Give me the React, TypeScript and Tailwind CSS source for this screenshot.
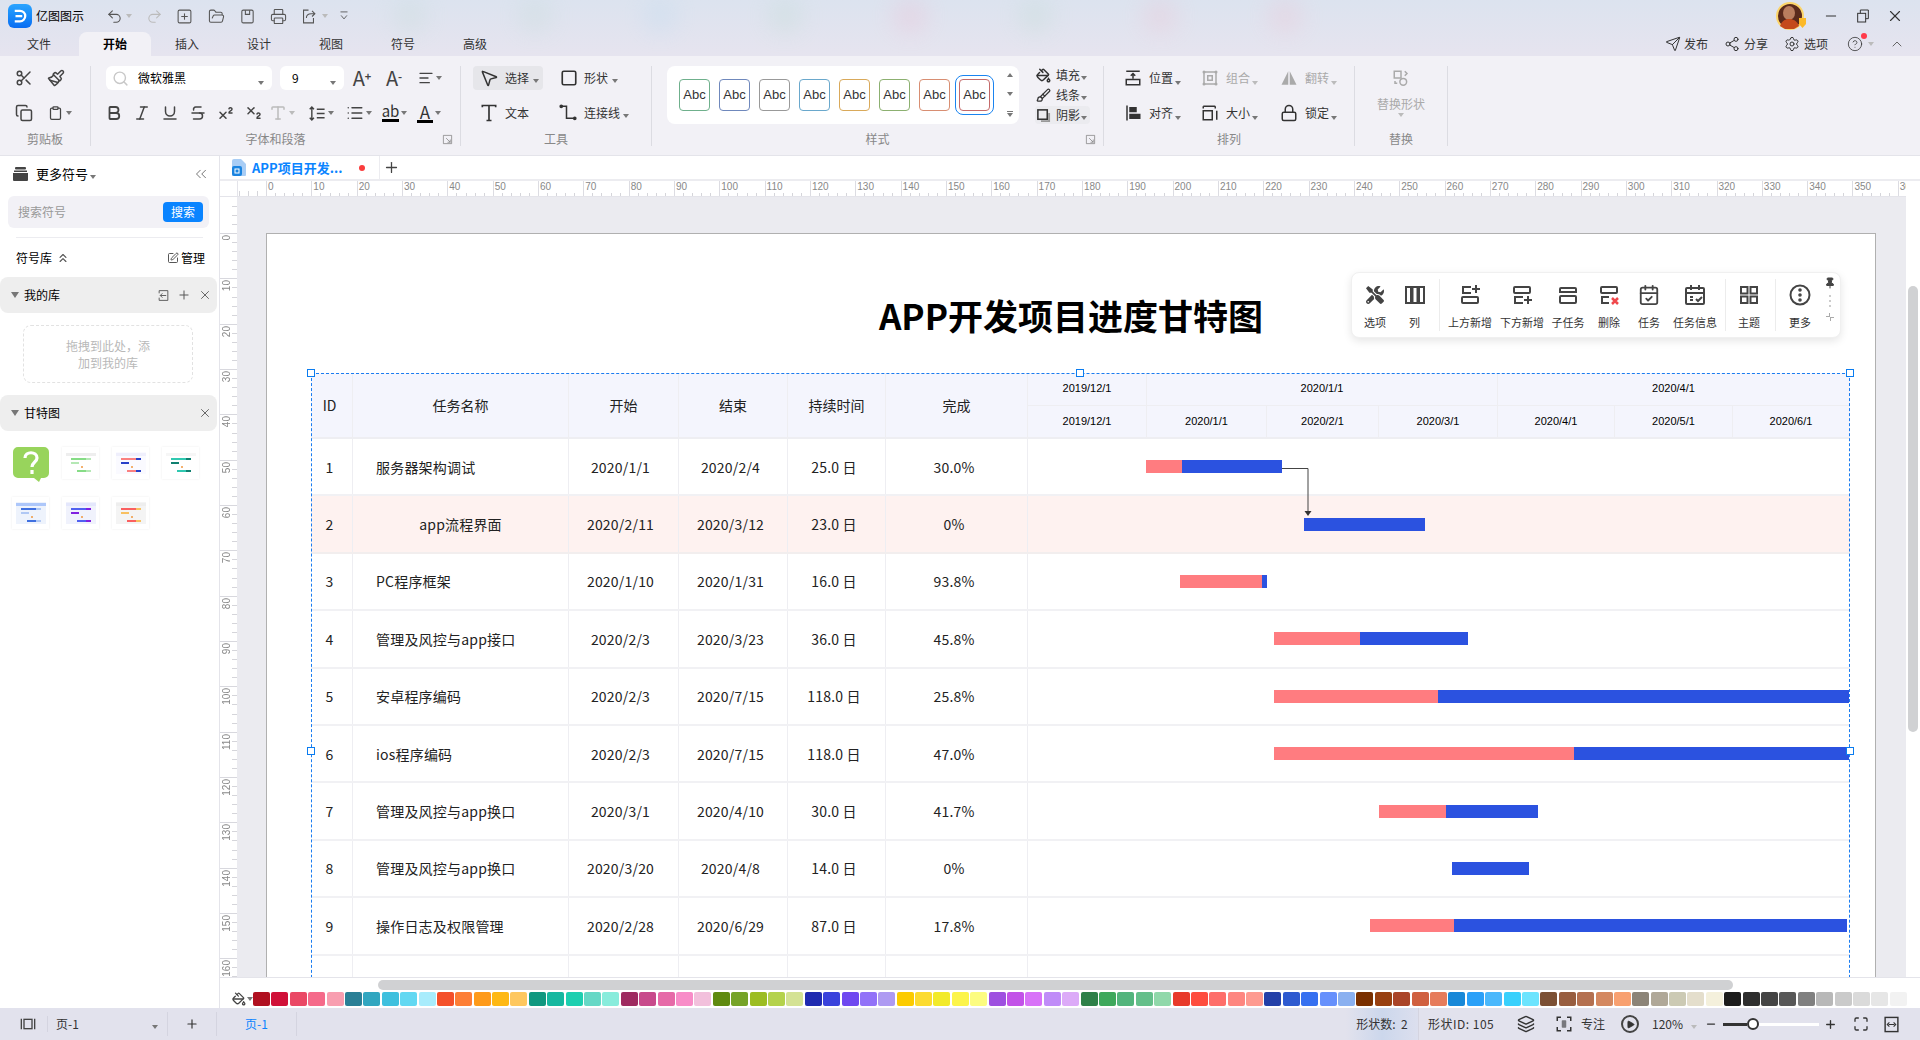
import {
  Bold, Brush, CalendarCheck, ChevronUp, ChevronsLeft, ChevronsUp, CircleHelp, Clipboard, Copy, FolderOpen, Italic,
  Layers, List, Lock, Maximize, Minus, MousePointer2, Paintbrush, PaintBucket, Pin, Play, Plus, Printer, Redo2, Scissors,
  Search, Send, Settings, Share2, Square, SquarePen, SquarePlus, Strikethrough, Subscript, Superscript, Type, Underline,
  Undo2, X, AlignLeft,
} from 'lucide-react'
import { FaTools } from 'react-icons/fa'
import type { ReactNode } from 'react'

const Caret = ({ light }: { light?: boolean }) => (
  <span className={light ? 'inline-block shrink-0 border-x-[3px] border-t-[4px] border-x-transparent border-t-[#bbb]' : 'inline-block shrink-0 border-x-[3px] border-t-[4px] border-x-transparent border-t-[#777]'} />
)

const Svg = ({ children, size = 16, className = '' }: { children: ReactNode; size?: number; className?: string }) => (
  <svg width={size} height={size} viewBox="0 0 24 24" fill="none" stroke="currentColor" strokeWidth="2" className={className}>
    {children}
  </svg>
)

const QuickBar = () => (
  <div className="ml-[22px] flex items-center text-[#555]">
    <div className="flex w-[40px] items-center gap-[3px]"><Undo2 size={17} strokeWidth={1.5} /><Caret light /></div>
    <div className="w-[30px] text-[#bbb]"><Redo2 size={17} strokeWidth={1.5} /></div>
    <div className="w-[32px]"><SquarePlus size={17} strokeWidth={1.5} /></div>
    <div className="w-[31px]"><FolderOpen size={17} strokeWidth={1.5} /></div>
    <div className="w-[31px]">
      <Svg size={17}><rect x="4" y="3" width="16" height="18" rx="2" strokeWidth="1.5" /><path d="M9 3v6h6V3" strokeWidth="1.5" /></Svg>
    </div>
    <div className="w-[30px]"><Printer size={17} strokeWidth={1.5} /></div>
    <div className="flex w-[37px] items-center gap-[5px]">
      <Svg size={17}><path d="M12 3H5v18h14v-7" strokeWidth="1.5" /><path d="M9 14c0-4 3-6 7-6h4M17 4l4 4-4 4" strokeWidth="1.5" /></Svg>
      <Caret light />
    </div>
    <Svg size={14}><path d="M6 5h12M7 11l5 6 5-6" strokeWidth="1.5" /></Svg>
  </div>
)

const MenuTab = ({ label, active }: { label: string; active?: boolean }) => (
  <div className={active ? 'ml-1 flex w-[72px] items-center justify-center rounded-t-lg bg-[#f2f1f6] font-bold text-black' : 'flex w-[72px] items-center justify-center text-[#333]'}>{label}</div>
)

const Spot = ({ className }: { className: string }) => <div className={`size-8 shrink-0 rounded-full opacity-30 blur-md ${className}`} />

const Header = () => (
  <div className="relative h-14 shrink-0 overflow-hidden bg-gradient-to-b from-[#dce3ef] to-[#e6e4ef] text-xs">
    <div className="absolute left-[394px] top-0 flex gap-[93px]">
      <Spot className="bg-[#bcd8d0]" />
      <Spot className="bg-[#bcd8d0]" />
      <Spot className="bg-[#b5d8ee]" />
      <Spot className="bg-[#b5d8c8]" />
      <Spot className="bg-[#f2b0c8]" />
      <Spot className="bg-[#b5d8c8]" />
      <Spot className="bg-[#f2b8c8]" />
      <Spot className="bg-[#f2b8c8]" />
    </div>
    <div className="relative flex h-8 items-center pl-2 pr-[9px]">
      <div className="flex size-6 items-center justify-center rounded-md bg-gradient-to-b from-[#2aa4ff] to-[#0b6df2]">
        <svg width="18" height="18" viewBox="0 0 24 24" fill="none" stroke="#fff" strokeWidth="3"><path d="M5 5h7a7 7 0 0 1 0 14H5M6 12h9" /></svg>
      </div>
      <span className="ml-1 text-black">亿图图示</span>
      <QuickBar />
      <div className="ml-auto mr-[11px] h-7 w-7">
        <svg width="32" height="30" viewBox="0 0 32 30">
          <circle cx="14" cy="14" r="13" fill="#5a2a1c" stroke="#fcd56a" strokeWidth="2" />
          <ellipse cx="13" cy="11" rx="6" ry="7" fill="#b97d5e" />
          <path d="M4 24c2-6 6-7 9-7s8 1 10 7l-5 3H9z" fill="#c4491c" />
          <path d="M23 16h7v6l-3.500 4-3.500-4z" fill="#fcb928" />
        </svg>
      </div>
      <div className="flex w-8 justify-center text-[#333]"><Minus size={16} strokeWidth={1.5} /></div>
      <div className="flex w-8 justify-center text-[#333]">
        <Svg><rect x="4" y="8" width="12" height="13" strokeWidth="1.5" /><path d="M8 8V3h12v13h-4" strokeWidth="1.5" /></Svg>
      </div>
      <div className="flex w-8 justify-center text-[#333]"><X size={18} strokeWidth={1.5} /></div>
    </div>
    <div className="relative flex h-6 pl-[3px]">
      <MenuTab label="文件" />
      <MenuTab label="开始" active />
      <MenuTab label="插入" />
      <MenuTab label="设计" />
      <MenuTab label="视图" />
      <MenuTab label="符号" />
      <MenuTab label="高级" />
      <div className="ml-auto flex items-center pr-[15px] text-[#333]">
        <Send size={16} strokeWidth={1.5} />
        <span className="ml-[3px]">发布</span>
        <Share2 size={16} strokeWidth={1.5} className="ml-4" />
        <span className="ml-1">分享</span>
        <Settings size={16} strokeWidth={1.5} className="ml-4" />
        <span className="ml-1">选项</span>
        <div className="relative ml-[19px] flex items-center gap-[5px]">
          <CircleHelp size={16} strokeWidth={1.2} />
          <span className="absolute left-[14px] -top-[3px] size-[6px] rounded-full bg-[#ff3b4b]" />
          <Caret light />
        </div>
        <ChevronUp size={16} strokeWidth={1.5} className="ml-[15px] text-[#666]" />
      </div>
    </div>
  </div>
)

const GroupLabel = ({ children }: { children: ReactNode }) => (
  <div className="mt-auto flex h-[14px] items-center justify-center text-xs leading-none text-[#888]">{children}</div>
)

const Launcher = () => (
  <div className="absolute bottom-[1px] right-[7px] text-[#777]">
    <Svg size={11}><path d="M3 21V3h18v18z" strokeWidth="1.500" /><path d="M9 9l9 9M18 12v6h-6" strokeWidth="1.500" /></Svg>
  </div>
)

const Row = ({ children }: { children: ReactNode }) => <div className="flex h-6 items-center">{children}</div>

const Cell = ({ children, className = 'w-7' }: { children: ReactNode; className?: string }) => (
  <div className={`flex shrink-0 items-center justify-center ${className}`}>{children}</div>
)

const ic = { size: 18, strokeWidth: 2 }

const ClipGroup = () => (
  <div className="relative flex h-20 w-[91px] shrink-0 flex-col border-r border-[#dcdce2] text-[#444]">
    <Row>
      <div className="ml-2 flex">
        <Cell className="w-8"><Scissors {...ic} /></Cell>
        <Cell className="w-8"><Paintbrush {...ic} /></Cell>
      </div>
    </Row>
    <div className="mt-[11px]">
      <Row>
        <div className="ml-2 flex">
          <Cell className="w-8"><Copy {...ic} /></Cell>
          <Cell className="w-8 gap-[3px] pl-[8px]"><Clipboard {...ic} /><Caret /></Cell>
        </div>
      </Row>
    </div>
    <GroupLabel>剪贴板</GroupLabel>
  </div>
)

const FontGroup = () => (
  <div className="relative flex h-20 w-[370px] shrink-0 flex-col border-r border-[#dcdce2] text-[#444]">
    <Row>
      <div className="ml-[15px] flex h-6 w-[166px] items-center rounded-md bg-white pl-[6px] pr-2">
        <Search size={17} strokeWidth={2} className="text-[#c8c8c8]" />
        <span className="ml-[9px] text-xs text-black">微软雅黑</span>
        <span className="ml-auto"><Caret /></span>
      </div>
      <div className="ml-2 flex h-6 w-16 items-center rounded-md bg-white pl-3 pr-2">
        <span className="text-xs text-black">9</span>
        <span className="ml-auto"><Caret /></span>
      </div>
      <Cell className="ml-[2px] w-8">
        <span className="text-[20px] leading-none text-[#444]">A<sup className="text-[11px] font-bold">+</sup></span>
      </Cell>
      <Cell className="w-8">
        <span className="text-[20px] leading-none text-[#444]">A<sup className="text-[11px] font-bold">-</sup></span>
      </Cell>
      <Cell className="ml-2 w-6 gap-[2px]"><AlignLeft {...ic} /><Caret /></Cell>
    </Row>
    <div className="mt-[11px]">
      <Row>
        <div className="ml-[9px] flex items-center">
          <Cell><Bold {...ic} strokeWidth={2.4} /></Cell>
          <Cell><Italic {...ic} /></Cell>
          <Cell><Underline {...ic} /></Cell>
          <Cell><Strikethrough {...ic} /></Cell>
          <Cell><Superscript {...ic} /></Cell>
          <Cell><Subscript {...ic} /></Cell>
          <Cell className="w-7 gap-[2px] text-[#bbb]"><Type {...ic} /><Caret light /></Cell>
        </div>
        <div className="ml-[13px] flex w-[37px] items-center gap-[2px]">
          <Svg size={17}>
            <path d="M4 3v18M1 6l3-3 3 3M1 18l3 3 3-3M11 6h11M11 12h11M11 18h11" />
          </Svg>
          <Caret />
        </div>
        <div className="flex w-9 items-center gap-[2px]"><List {...ic} /><Caret /></div>
        <div className="flex w-[35px] items-center gap-[2px]">
          <div className="flex w-[17px] flex-col items-center text-[15px] leading-[14px] text-[#333]">
            <span>ab</span>
            <span className="mt-[1px] h-[3px] w-full bg-black" />
          </div>
          <Caret />
        </div>
        <div className="flex items-center gap-[2px]">
          <div className="flex w-4 flex-col items-center text-[17px] leading-[15px] text-[#333]">
            <span>A</span>
            <span className="mt-[1px] h-[3px] w-full bg-black" />
          </div>
          <Caret />
        </div>
      </Row>
    </div>
    <GroupLabel>字体和段落</GroupLabel>
    <Launcher />
  </div>
)

const ToolsGroup = () => (
  <div className="relative flex h-20 w-[191px] shrink-0 flex-col border-r border-[#dcdce2] text-xs text-[#333]">
    <Row>
      <div className="ml-3 flex h-6 w-[70px] items-center rounded bg-[#e6e6ea] pl-[6px]">
        <MousePointer2 size={20} strokeWidth={1.8} />
        <span className="ml-[6px]">选择</span>
        <span className="ml-[4px]"><Caret /></span>
      </div>
      <div className="ml-[17px]"><Square size={18} strokeWidth={2.2} /></div>
      <span className="ml-[6px]">形状</span>
      <span className="ml-[4px]"><Caret /></span>
    </Row>
    <div className="mt-[11px]">
      <Row>
        <div className="ml-[18px]"><Svg size={20}><path d="M4 5V3h16v2M12 3v18M9 21h6" /></Svg></div>
        <span className="ml-[6px]">文本</span>
        <div className="ml-[30px]">
          <Svg size={18}><path d="M3 3h7v16h9" /><circle cx="3" cy="3" r="1.500" fill="currentColor" /><circle cx="21" cy="19" r="1.500" fill="currentColor" /></Svg>
        </div>
        <span className="ml-[7px]">连接线</span>
        <span className="ml-[3px]"><Caret /></span>
      </Row>
    </div>
    <GroupLabel>工具</GroupLabel>
  </div>
)

const styleColors = ['border-[#6fb08c]', 'border-[#6f88bc]', 'border-[#999999]', 'border-[#6aa8cc]', 'border-[#d9a95a]', 'border-[#8cb070]', 'border-[#d88e72]']

const StylesGroup = () => (
  <div className="relative flex h-20 w-[452px] shrink-0 flex-col border-r border-[#dcdce2]">
    <div className="flex">
      <div className="ml-[15px] flex h-[58px] w-[352px] items-center rounded-lg bg-white pl-3">
        <div className="flex gap-[9px]">
          {styleColors.map(c => (
            <div key={c} className={`flex h-8 w-[31px] items-center justify-center rounded border bg-white font-['Liberation_Sans',sans-serif] text-[13px] text-[#333] ${c}`}>Abc</div>
          ))}
          <div className="flex h-8 w-[31px] items-center justify-center rounded border border-[#c46a6a] bg-white font-['Liberation_Sans',sans-serif] text-[13px] text-[#333] outline-[1.5px] outline-offset-[3px] outline-[#1a84f0]">Abc</div>
        </div>
        <div className="ml-[17px] flex h-[44px] flex-col items-center justify-between">
          <span className="inline-block border-x-[3px] border-b-[4px] border-x-transparent border-b-[#777]" />
          <Caret />
          <div className="flex flex-col items-center gap-[1px]">
            <span className="h-px w-[6px] bg-[#777]" />
            <Caret />
          </div>
        </div>
      </div>
      <div className="ml-[16px] flex h-[58px] w-[55px] flex-col justify-between text-xs text-[#333]">
        <div className="flex h-[18px] items-center pl-[1px]">
          <PaintBucket size={15} strokeWidth={2.4} />
          <span className="ml-[5px]">填充</span>
          <span className="ml-[1px]"><Caret /></span>
        </div>
        <div className="flex h-[18px] items-center pl-[1px]">
          <Brush size={15} strokeWidth={2} />
          <span className="ml-[5px]">线条</span>
          <span className="ml-[1px]"><Caret /></span>
        </div>
        <div className="flex h-[18px] items-center rounded bg-[#ebebef] pl-[1px]">
          <Svg size={15}><rect x="3" y="3" width="15" height="15" strokeWidth="2.500" /><path d="M21 8v13H8" strokeWidth="3" stroke="#999" /></Svg>
          <span className="ml-[5px]">阴影</span>
          <span className="ml-[1px]"><Caret /></span>
        </div>
      </div>
    </div>
    <GroupLabel>样式</GroupLabel>
    <Launcher />
  </div>
)

const ArrangeItem = ({ icon, label, off, className }: { icon: ReactNode; label: string; off?: boolean; className: string }) => (
  <div className={off ? `flex shrink-0 items-center text-[#aaa] ${className}` : `flex shrink-0 items-center text-[#333] ${className}`}>
    <div className="w-4 shrink-0">{icon}</div>
    <span className="ml-[9px] text-xs">{label}</span>
    <span className="ml-[2px]"><Caret light={off} /></span>
  </div>
)

const ArrangeGroup = () => (
  <div className="relative flex h-20 w-[251px] shrink-0 flex-col border-r border-[#dcdce2]">
    <Row>
      <div className="ml-5 flex">
        <ArrangeItem className="w-[77px]" label="位置" icon={<Svg size={18}><path d="M3 3h18M12 7v6M9 9l3-3 3 3" /><rect x="3" y="14" width="18" height="7" /></Svg>} />
        <ArrangeItem className="w-[79px]" off label="组合" icon={<Svg size={18}><rect x="4" y="4" width="16" height="16" /><rect x="9" y="9" width="6" height="6" /><circle cx="4" cy="4" r="1" /><circle cx="20" cy="4" r="1" /><circle cx="4" cy="20" r="1" /><circle cx="20" cy="20" r="1" /></Svg>} />
        <ArrangeItem className="w-16" off label="翻转" icon={<svg width="18" height="18" viewBox="0 0 24 24" fill="currentColor"><path d="M11 3v18H2zM13 3l9 18h-9z" /></svg>} />
      </div>
    </Row>
    <div className="mt-[11px]">
      <Row>
        <div className="ml-5 flex">
          <ArrangeItem className="w-[77px]" label="对齐" icon={<Svg size={18}><path d="M4 2v20" /><rect x="8" y="5" width="8" height="5" fill="currentColor" /><rect x="8" y="14" width="13" height="5" fill="currentColor" /></Svg>} />
          <ArrangeItem className="w-[79px]" label="大小" icon={<Svg size={18}><path d="M3 3h16M3 6V3M19 6V3" /><rect x="3" y="9" width="12" height="12" /><path d="M21 9v12" /></Svg>} />
          <ArrangeItem className="w-16" label="锁定" icon={<Lock size={18} strokeWidth={2} />} />
        </div>
      </Row>
    </div>
    <GroupLabel>排列</GroupLabel>
  </div>
)

const ReplaceGroup = () => (
  <div className="relative flex h-20 w-[93px] shrink-0 flex-col items-center border-r border-[#dcdce2]">
    <div className="mt-[3px] flex h-[18px] text-[#aaa]">
      <Svg size={18}><rect x="3" y="3" width="9" height="9" /><circle cx="15" cy="17" r="4.500" /><path d="M17 3l3 3-3 3M4 16v3l3 0" /></Svg>
    </div>
    <span className="mt-[9px] text-xs leading-4 text-[#aaa]">替换形状</span>
    <div className="mt-px flex h-1"><Caret light /></div>
    <div className="mt-auto flex w-full flex-col"><GroupLabel>替换</GroupLabel></div>
  </div>
)

const Ribbon = () => (
  <div className="flex h-[99px] shrink-0 bg-[#f2f1f6] pt-[10px]">
    <ClipGroup />
    <FontGroup />
    <ToolsGroup />
    <StylesGroup />
    <ArrangeGroup />
    <ReplaceGroup />
  </div>
)

const Thumb = ({ head, a, b, bg }: { head: string; a: string; b: string; bg: string }) => (
  <svg width="37" height="32" viewBox="0 0 37 32" className="shadow-[0_0_2px_rgba(0,0,0,0.08)]">
    <rect width="37" height="32" fill="#fff" />
    <rect x="4" y="5" width="30" height="22" fill={bg} />
    <rect x="4" y="6" width="30" height="3" fill={head} opacity="0.5" />
    <rect x="9" y="11" width="20" height="2" fill={a} />
    <rect x="24" y="11" width="5" height="2" fill={b} />
    <rect x="9" y="15" width="8" height="2" fill={b} />
    <rect x="19" y="19" width="2" height="2" fill="#f09030" opacity="0.7" />
    <rect x="15" y="23" width="14" height="2" fill={a} />
    <rect x="24" y="23" width="5" height="2" fill={b} />
  </svg>
)

const LeftPanel = () => (
  <div className="flex w-[220px] shrink-0 flex-col border-r border-[#e4e4ea] bg-white text-xs text-black">
    <div className="flex h-9 items-center pl-[13px] pr-[9px]">
      <svg width="15" height="14" viewBox="0 0 15 14" fill="#444"><rect x="2" y="0" width="11" height="2.500" rx="1" /><rect x="1" y="3.500" width="13" height="1.500" /><path d="M0 6h15v7a1 1 0 0 1-1 1H1a1 1 0 0 1-1-1z" /></svg>
      <span className="ml-2 text-[13px]">更多符号</span>
      <span className="ml-[2px]"><Caret /></span>
      <ChevronsLeft size={18} strokeWidth={1.2} className="ml-auto text-[#666]" />
    </div>
    <div className="mx-2 mt-1 flex h-8 w-[201px] items-center rounded-md bg-[#f2f1f6] pl-[10px] pr-[6px]">
      <span className="text-[#999]">搜索符号</span>
      <div className="ml-auto flex h-5 w-10 items-center justify-center rounded bg-[#0a84ff] text-white">搜索</div>
    </div>
    <div className="mx-4 mt-[9px] h-px bg-[#ececf0]" />
    <div className="flex h-[39px] items-center pl-4 pr-[14px]">
      <span>符号库</span>
      <ChevronsUp size={14} strokeWidth={2} className="ml-[4px] text-[#555]" />
      <SquarePen size={12} strokeWidth={1.8} className="ml-auto text-[#444]" />
      <span className="ml-[2px]">管理</span>
    </div>
    <div className="flex h-9 w-[217px] items-center rounded-lg bg-[#eeeeee] pl-[11px] pr-[5px]">
      <span className="inline-block border-x-[4px] border-t-[6px] border-x-transparent border-t-[#777]" />
      <span className="ml-[5px]">我的库</span>
      <div className="ml-auto flex items-center gap-[7px] text-[#555]">
        <Svg size={13}><path d="M4 8V3h16v18H4v-5" strokeWidth="1.700" /><path d="M17 12H6M10 8l-4 4 4 4" strokeWidth="1.700" /></Svg>
        <Plus size={14} strokeWidth={1.7} />
        <X size={14} strokeWidth={1.5} />
      </div>
    </div>
    <div className="ml-[23px] mt-3 flex h-[58px] w-[170px] items-center justify-center rounded-lg border border-dashed border-[#e2e2e2] px-[38px] text-center leading-[17px] text-[#b8b8b8]">
      拖拽到此处，添加到我的库
    </div>
    <div className="mt-3 flex h-9 w-[217px] items-center rounded-lg bg-[#eeeeee] pl-[11px] pr-[5px]">
      <span className="inline-block border-x-[4px] border-t-[6px] border-x-transparent border-t-[#777]" />
      <span className="ml-[5px]">甘特图</span>
      <X size={14} strokeWidth={1.5} className="ml-auto text-[#555]" />
    </div>
    <div className="ml-[12px] mt-4 grid w-[187px] grid-cols-[37px_37px_37px_37px] gap-x-[13px] gap-y-[18px]">
      <div className="flex h-8 items-start justify-center">
        <svg width="36" height="36" viewBox="0 0 36 36"><path d="M5 0h26a5 5 0 0 1 5 5v21a5 5 0 0 1-5 5h-3l-2 4-5-4H5a5 5 0 0 1-5-5V5a5 5 0 0 1 5-5z" fill="#98d45c" /><path d="M12 11c0-7 12-7 12 0 0 4-5 4-5 9M19 23v4" stroke="#fff" strokeWidth="3.200" fill="none" /></svg>
      </div>
      <Thumb head="#dddddd" a="#86dc86" b="#b5e8b5" bg="#ffffff" />
      <Thumb head="#e4e4fa" a="#fa8080" b="#2840c8" bg="#fafaff" />
      <Thumb head="#eeeeee" a="#30c8b0" b="#108070" bg="#ffffff" />
      <Thumb head="#6c9cf8" a="#4070e0" b="#b0c8f4" bg="#eef3fc" />
      <Thumb head="#d8dcfc" a="#5060f0" b="#8020e0" bg="#f0f2fc" />
      <Thumb head="#e8e8e8" a="#fa6060" b="#f8c060" bg="#f4f4f4" />
    </div>
  </div>
)

const TabBar = () => (
  <div className="flex h-[25px] shrink-0 items-center border-b-2 border-[#ececf0] bg-white">
    <div className="ml-[12px]">
      <svg width="14" height="17" viewBox="0 0 14 17"><path d="M2 0h7l5 5v11a1 1 0 0 1-1 1H1a1 1 0 0 1-1-1V2a2 2 0 0 1 2-2z" fill="#a8cdf5" /><rect x="0" y="7" width="10" height="10" rx="2" fill="#1a84e0" /><rect x="3" y="10" width="4" height="4" fill="none" stroke="#fff" /></svg>
    </div>
    <span className="ml-[6px] w-[86px] whitespace-nowrap text-[13px] font-bold text-[#0a84ff]">APP项目开发...</span>
    <span className="ml-[21px] size-[6px] rounded-full bg-[#fa3c3c]" />
    <span className="ml-[14px] h-full border-l border-[#ececf0]" />
    <Plus size={17} strokeWidth={1.8} className="ml-[3px] text-[#444]" />
  </div>
)

const HRuler = () => (
  <div className="flex h-4 shrink-0 overflow-hidden border-b border-[#e4e4ea] bg-white pl-[17px] font-['Liberation_Sans',sans-serif] text-[10px] leading-[12px] text-[#888]">
    <div className="flex w-[29px] shrink-0 items-end justify-end border-l border-[#e4e4ea]">
      {[0, 1, 2].map(i => <span key={i} className="h-[5px] w-[9px] border-l border-[#d5d5da]" />)}
    </div>
    {Array.from({ length: 37 }, (_, i) => (
      <div key={i} className="flex w-[45.33px] shrink-0 flex-col border-l border-[#dcdce2]">
        <span className="pl-[1px]">{i * 10}</span>
        <div className="mt-auto flex h-[5px] justify-end">
          {[0, 1, 2, 3].map(j => <span key={j} className="w-[9.06px] border-l border-[#d5d5da]" />)}
        </div>
      </div>
    ))}
  </div>
)

const VRuler = () => (
  <div className="flex w-[17px] shrink-0 flex-col overflow-hidden bg-white font-['Liberation_Sans',sans-serif] text-[10px] leading-[10px] text-[#888]">
    <div className="flex h-9 shrink-0 flex-col items-end justify-end">
      {[0, 1, 2].map(i => <span key={i} className="h-[9px] w-[5px] border-t border-[#d5d5da]" />)}
    </div>
    {Array.from({ length: 17 }, (_, i) => (
      <div key={i} className="flex h-[45.33px] shrink-0 border-t border-[#d8d8de]">
        <span className="ml-[2px] mt-[1px] self-start rotate-180 [writing-mode:vertical-rl]">{i * 10}</span>
        <div className="ml-auto flex flex-col justify-end">
          {[0, 1, 2, 3].map(j => <span key={j} className="h-[9.06px] w-[5px] border-t border-[#d5d5da]" />)}
        </div>
      </div>
    ))}
  </div>
)

const tools = [
  { label: '选项', cell: 'ml-[3px] w-10', icon: <FaTools size={18} /> },
  { label: '列', cell: 'w-[39px]', icon: <Svg size={24}><rect x="3" y="4" width="5" height="16" /><rect x="9.500" y="4" width="5" height="16" /><rect x="16" y="4" width="5" height="16" /></Svg> },
  { label: 'sep', cell: 'ml-[5px]', icon: null },
  { label: '上方新增', cell: 'ml-[5px] w-[50px]', icon: <Svg size={24}><path d="M13 4H5v6h8" /><path d="M18 2v8M14 6h8" /><rect x="4" y="14" width="16" height="6" rx="1" /></Svg> },
  { label: '下方新增', cell: 'ml-[2px] w-[50px]', icon: <Svg size={24}><rect x="4" y="4" width="16" height="6" rx="1" /><path d="M13 14H5v6h8" /><path d="M18 13v8M14 17h8" /></Svg> },
  { label: '子任务', cell: 'ml-[1px] w-10', icon: <Svg size={24}><path d="M4 9V6a1 1 0 0 1 1-1h14a1 1 0 0 1 1 1v3z" /><rect x="4" y="13" width="16" height="7" rx="1" /></Svg> },
  { label: '删除', cell: 'ml-[1px] w-10', icon: <Svg size={24}><rect x="4" y="4" width="16" height="6" rx="1" /><path d="M12 14H5v6h7" /><path d="M15 15l6 6M21 15l-6 6" stroke="#f0484c" strokeWidth="2.500" /></Svg> },
  { label: '任务', cell: 'w-10', icon: <CalendarCheck size={22} strokeWidth={2} /> },
  { label: '任务信息', cell: 'ml-[1px] w-[50px]', icon: <Svg size={24}><rect x="3" y="5" width="18" height="16" rx="1" /><path d="M8 2v5M16 2v5M3 10h18M7 14h3M7 17h3M13 16l2 2 4-4" /></Svg> },
  { label: 'sep', cell: 'ml-[5px]', icon: null },
  { label: '主题', cell: 'ml-[3px] w-10', icon: <Svg size={24}><rect x="4" y="4" width="6.500" height="6.500" /><rect x="13.500" y="4" width="6.500" height="6.500" /><rect x="4" y="13.500" width="6.500" height="6.500" /><rect x="13.500" y="13.500" width="6.500" height="6.500" /></Svg> },
  { label: 'sep', cell: 'ml-[6px]', icon: null },
  { label: '更多', cell: 'ml-[4px] w-10', icon: <Svg size={24}><circle cx="12" cy="12" r="9.500" /><circle cx="12" cy="7" r="0.800" fill="currentColor" /><circle cx="12" cy="12" r="0.800" fill="currentColor" /><circle cx="12" cy="17" r="0.800" fill="currentColor" /></Svg> },
]

const FloatBar = () => (
  <div className="absolute left-[1084px] top-[38px] z-10 flex h-[66px] w-[490px] items-center rounded-lg border border-[#f0f0f0] bg-white text-[11px] text-[#333] shadow-[0_3px_8px_rgba(0,0,0,0.1)]">
    {tools.map((t, i) =>
      t.label === 'sep' ? (
        <span key={i} className={`h-[52px] border-l border-[#ececec] ${t.cell}`} />
      ) : (
        <div key={i} className={`flex shrink-0 flex-col items-center pt-[2px] ${t.cell}`}>
          <div className="flex h-6 items-center text-[#444]">{t.icon}</div>
          <span className="mt-[7px] whitespace-nowrap leading-4">{t.label}</span>
        </div>
      )
    )}
    <div className="ml-[4px] flex h-full flex-col items-center pt-[4px] text-[#444]">
      <Pin size={12} strokeWidth={2} fill="currentColor" />
      <div className="mt-[6px] flex flex-col gap-[3px]">
        {[0, 1, 2].map(i => <span key={i} className="size-[2px] bg-[#ccc]" />)}
      </div>
      <div className="mt-[8px] flex">
        <span className="-mt-[2px] size-[4px] border-b border-r border-[#aaa]" />
        <span className="mt-[2px] size-[4px] border-l border-t border-[#aaa]" />
      </div>
    </div>
  </div>
)

const rows = [
  { id: 1, name: '服务器架构调试', start: '2020/1/1', end: '2020/2/4', days: '25.0 日', done: '30.0%', bar: [1146, 1182, 1282] },
  { id: 2, name: 'app流程界面', start: '2020/2/11', end: '2020/3/12', days: '23.0 日', done: '0%', bar: [1304, 1304, 1425], center: true },
  { id: 3, name: 'PC程序框架', start: '2020/1/10', end: '2020/1/31', days: '16.0 日', done: '93.8%', bar: [1180, 1262, 1267] },
  { id: 4, name: '管理及风控与app接口', start: '2020/2/3', end: '2020/3/23', days: '36.0 日', done: '45.8%', bar: [1273.5, 1360, 1468] },
  { id: 5, name: '安卓程序编码', start: '2020/2/3', end: '2020/7/15', days: '118.0 日', done: '25.8%', bar: [1273.5, 1437.5, 1849] },
  { id: 6, name: 'ios程序编码', start: '2020/2/3', end: '2020/7/15', days: '118.0 日', done: '47.0%', bar: [1273.5, 1573.5, 1849] },
  { id: 7, name: '管理及风控与app换口', start: '2020/3/1', end: '2020/4/10', days: '30.0 日', done: '41.7%', bar: [1379, 1446, 1538] },
  { id: 8, name: '管理及风控与app换口', start: '2020/3/20', end: '2020/4/8', days: '14.0 日', done: '0%', bar: [1452, 1452, 1529] },
  { id: 9, name: '操作日志及权限管理', start: '2020/2/28', end: '2020/6/29', days: '87.0 日', done: '17.8%', bar: [1370, 1453.5, 1846.5] },
]

const gridCols = 'grid grid-cols-[42px_216px_110px_109px_98px_142px_821px]'
const colLine = 'flex items-center justify-center border-r border-[#eeeef2]'

const TableHead = () => (
  <div className={`${gridCols} h-[66px] border-b-2 border-[#eeeef2] bg-[#f4f5fd] text-sm text-[#222]`}>
    <div className={`${colLine} pr-1`}>ID</div>
    <div className={colLine}>任务名称</div>
    <div className={colLine}>开始</div>
    <div className={colLine}>结束</div>
    <div className={colLine}>持续时间</div>
    <div className={colLine}>完成</div>
    <div className="flex flex-col font-['Liberation_Sans',sans-serif] text-[11px] text-black">
      <div className="flex h-[33px] border-b border-[#eeeef2]">
        <div className={`${colLine} w-[119px]`}>2019/12/1</div>
        <div className={`${colLine} w-[351px]`}>2020/1/1</div>
        <div className="flex w-[351px] items-center justify-center">2020/4/1</div>
      </div>
      <div className="flex flex-1">
        <div className={`${colLine} w-[119px]`}>2019/12/1</div>
        <div className={`${colLine} w-[120px]`}>2020/1/1</div>
        <div className={`${colLine} w-[112px]`}>2020/2/1</div>
        <div className={`${colLine} w-[119px]`}>2020/3/1</div>
        <div className={`${colLine} w-[117px]`}>2020/4/1</div>
        <div className={`${colLine} w-[118px]`}>2020/5/1</div>
        <div className="flex w-[116px] items-center justify-center">2020/6/1</div>
      </div>
    </div>
  </div>
)

const Handle = ({ className }: { className: string }) => (
  <span className={`absolute z-10 size-2 border border-[#0a7cf0] bg-white ${className}`} />
)

const GanttTable = () => (
  <div className="relative w-[1539px]">
    <div className="pointer-events-none absolute inset-0 z-10 border-x border-t border-dashed border-[#1a7cf0]" />
    <Handle className="-left-1 -top-1" />
    <Handle className="left-[765px] -top-1" />
    <Handle className="-right-1 -top-1" />
    <Handle className="-left-1 top-[374px]" />
    <Handle className="-right-1 top-[374px]" />
    <TableHead />
    {rows.map(r => (
      <div key={r.id} className={r.id === 2 ? `${gridCols} h-[57.4px] border-b-2 border-[#f2eeee] bg-[#fef2f0] text-sm tracking-[0.2px] text-[#222]` : `${gridCols} h-[57.4px] border-b-2 border-[#f1f1f4] text-sm tracking-[0.2px] text-[#222]`}>
        <div className={`${colLine} pr-1`}>{r.id}</div>
        <div className={r.center ? colLine : 'flex items-center border-r border-[#eeeef2] pl-[23px]'}>{r.name}</div>
        <div className={`${colLine} pr-[6px]`}>{r.start}</div>
        <div className={`${colLine} pr-[5px]`}>{r.end}</div>
        <div className={`${colLine} pr-[5px]`}>{r.days}</div>
        <div className={`${colLine} pr-[5px]`}>{r.done}</div>
        <div className="flex items-center">
          <div className="h-[13px] bg-[#ff7c80]" style={{ marginLeft: r.bar[0] - 1028, width: r.bar[1] - r.bar[0] }} />
          <div className="h-[13px] bg-[#2b52e0]" style={{ width: r.bar[2] - r.bar[1] }} />
        </div>
      </div>
    ))}
    <div className={`${gridCols} h-[57.4px]`}>
      <div className={colLine} />
      <div className={colLine} />
      <div className={colLine} />
      <div className={colLine} />
      <div className={colLine} />
      <div className={colLine} />
      <div />
    </div>
    <svg className="absolute left-[971px] top-[95px]" width="30" height="50" viewBox="0 0 30 50" fill="none">
      <path d="M0 .5h26v44" stroke="#444" />
      <path d="M22.500 43h7l-3.500 5z" fill="#333" />
    </svg>
  </div>
)

const Canvas = () => (
  <div className="min-w-0 flex-1 overflow-hidden bg-[#ebebf0] pl-[29px] pt-9">
    <div className="relative h-[900px] w-[1610px] border-l border-r border-t border-[#b0b0b0] bg-white pl-[44px]">
      <FloatBar />
      <div className="flex h-[139px] w-[1520px] items-center justify-center pt-[24px] text-[35px] font-bold text-black">
        APP开发项目进度甘特图
      </div>
      <GanttTable />
    </div>
  </div>
)

const palette = [
  '#b01020', '#d01038', '#ea4865', '#f56a8a', '#f89eb0',
  '#2a7f96', '#31a6c0', '#3fc0de', '#62d8f2', '#a8ecfc',
  '#f4502a', '#fd7e36', '#fe9a1a', '#feb814', '#fec75e',
  '#109880', '#16b8a0', '#1dcfb0', '#66d8c6', '#88ecdc',
  '#9e2a60', '#c84a8c', '#e66aa8', '#f88cc8', '#f2c0dc',
  '#5f8a10', '#76a328', '#9cbd22', '#b4d24c', '#d4e294',
  '#1f2ab0', '#3a42dc', '#6f48f0', '#9272f8', '#ae9af2',
  '#fccb00', '#fcdb30', '#f2ea2a', '#fcf44a', '#fcfc80',
  '#9e50e0', '#c252e8', '#d872f8', '#c08cf8', '#dcaaf8',
  '#2e8048', '#3ea85c', '#52b47c', '#64bf8a', '#90d8aa',
  '#e83a2a', '#fe4c3e', '#fe6e6a', '#fe8680', '#fe9a90',
  '#2440a8', '#2e5ad0', '#3670f0', '#6690fc', '#8ab0f0',
  '#7a3000', '#984010', '#aa4428', '#d06040', '#e67c5c',
  '#1888d8', '#2aa0f8', '#4ab8fc', '#38d0fc', '#6ce4fe',
  '#7c5034', '#985e40', '#b47050', '#d48860', '#f8a070',
  '#8c8478', '#b0a898', '#cccab4', '#e4decc', '#f4f0dc',
  '#1c1c1c', '#2e2e2e', '#444444', '#585858', '#808080', '#b8b8b8', '#cacaca', '#dadada', '#e6e6e6', '#f2f2f2', '#ffffff',
]

const ColorRow = () => (
  <div className="flex h-4 shrink-0 items-start bg-white pl-[12px]">
    <div className="flex w-[26px] items-center gap-[1px] text-[#444]">
      <PaintBucket size={14} strokeWidth={2.2} />
      <Caret />
    </div>
    <div className="flex gap-[1.4px]">
      {palette.map((c, i) => (
        <span key={i} className="h-[14px] w-[17px] rounded-[2px]" style={{ backgroundColor: c }} />
      ))}
    </div>
  </div>
)

const StatusBar = () => (
  <div className="flex h-8 shrink-0 items-center bg-[#e2e2ed] text-xs text-[#333]">
    <div className="flex w-12 justify-center border-r border-[#d4d4e0] pl-[8px] text-[#444]">
      <Svg size={16}><rect x="6" y="5" width="12" height="14" /><path d="M2 4v16M22 4v16" /></Svg>
    </div>
    <div className="flex h-6 w-[120px] items-center border-r border-[#d4d4e0] pl-2 pr-[9px]">
      <span>页-1</span>
      <span className="ml-auto"><Caret /></span>
    </div>
    <div className="flex h-6 w-[49px] items-center justify-center border-r border-[#d4d4e0]"><Plus size={14} strokeWidth={2} /></div>
    <div className="flex h-6 w-20 items-center justify-center border-r border-[#d4d4e0] text-[#0a84ff]">页-1</div>
    <div className="ml-[1049px] flex h-full w-[73px] items-center justify-center whitespace-pre border-r border-[#d4d4e0] bg-gradient-to-r from-[#e2e2ed] via-[#ccd7ec] to-[#dcdfee]">形状数:  2</div>
    <span className="ml-[9px] w-[80px] whitespace-nowrap tracking-[0.5px]">形状ID: 105</span>
    <div className="ml-[9px]"><Layers size={18} strokeWidth={2} /></div>
    <div className="ml-[20px] flex items-center gap-[8px]">
      <Svg size={18}><path d="M3 8V3h5M16 3h5v5M21 16v5h-5M8 21H3v-5" /><rect x="9" y="7" width="6" height="10" rx="1" fill="currentColor" stroke="none" opacity="0.6" /></Svg>
      <span>专注</span>
    </div>
    <div className="ml-[16px] flex size-[18px] items-center justify-center rounded-full border-2 border-[#444]">
      <Play size={9} fill="currentColor" />
    </div>
    <span className="ml-[13px]">120%</span>
    <span className="ml-[8px]"><Caret light /></span>
    <Minus size={12} strokeWidth={2.500} className="ml-2" />
    <div className="ml-[6px] flex w-24 items-center">
      <span className="h-[3px] w-[24px] bg-[#333]" />
      <span className="size-3 shrink-0 rounded-full border-2 border-[#333] bg-white" />
      <span className="h-[3px] flex-1 bg-white" />
    </div>
    <Plus size={13} strokeWidth={2.500} className="ml-[5px]" />
    <Maximize size={16} strokeWidth={2} className="ml-4" />
    <div className="ml-[14px]">
      <Svg size={17}><rect x="3" y="2" width="18" height="20" /><path d="M8 12h8M9 9l-3 3 3 3M15 9l3 3-3 3" strokeWidth="1.500" /></Svg>
    </div>
  </div>
)

export default function App() {
  return (
    <div className="flex h-[1040px] w-[1920px] flex-col overflow-hidden bg-white font-['Noto_Sans_CJK_SC','Noto_Sans',sans-serif]">
      <Header />
      <Ribbon />
      <div className="flex h-[853px] border-t border-[#e4e4ea]">
        <LeftPanel />
        <div className="flex min-w-0 flex-1 flex-col">
          <TabBar />
          <div className="flex min-h-0 flex-1">
            <div className="flex min-w-0 flex-1 flex-col">
              <HRuler />
              <div className="flex min-h-0 flex-1">
                <VRuler />
                <Canvas />
              </div>
            </div>
            <div className="w-[14px] shrink-0 bg-white pl-[2px] pt-[105px]">
              <div className="h-[446px] w-[10px] rounded-full bg-[#d0d1d3]" />
            </div>
          </div>
          <div className="h-[15px] shrink-0 border-t border-[#e4e4ea] bg-white pl-[158px] pt-[2px]">
            <div className="h-[10px] w-[1355px] rounded-full bg-[#d0d1d3]" />
          </div>
          <ColorRow />
        </div>
      </div>
      <StatusBar />
    </div>
  )
}
